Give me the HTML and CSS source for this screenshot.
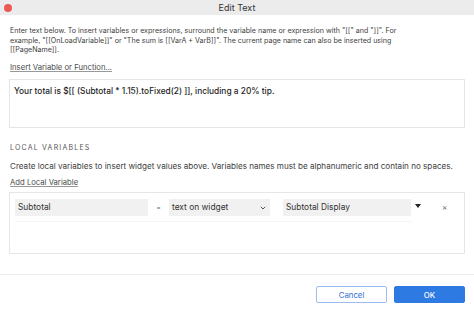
FILE: index.html
```html
<!DOCTYPE html>
<html lang="en">
<head>
  <meta charset="UTF-8" />
  <title>Edit Text</title>
  <link rel="stylesheet" href="styles.css">
</head>
<body>

  <div class="window">

    <div class="titlebar">
      <span class="close"></span>
      <span class="title">Edit Text</span>
      <span></span>
    </div>

    <div class="content">
      <p class="intro">
        Enter text below. To insert variables or expressions, surround the variable name or expression with "[[" and "]]". For<br>
        example, "[[OnLoadVariable]]" or "The sum is [[VarA + VarB]]". The current page name can also be inserted using<br>
        [[PageName]].
      </p>
      <a class="link link-insert" href="#">Insert Variable or Function...</a>

      <div class="editor">Your total is $[[ (Subtotal * 1.15).toFixed(2) ]], including a 20% tip.</div>

      <h4 class="section">LOCAL VARIABLES</h4>
      <p class="hint">Create local variables to insert widget values above. Variables names must be alphanumeric and contain no spaces.</p>
      <a class="link link-add" href="#">Add Local Variable</a>

      <div class="vars">
        <div class="var-row">
          <div class="field field-name">Subtotal</div>
          <span class="equals">=</span>
          <div class="field field-select">
            text on widget
            <svg class="chevron" width="6" height="4" viewBox="0 0 6 4"><path d="M0.8 0.8 L3 3 L5.2 0.8" fill="none" stroke="#555" stroke-width="1"/></svg>
          </div>
          <div class="field field-target">Subtotal Display</div>
          <svg class="caret" width="6" height="4" viewBox="0 0 6 4"><path d="M0 0 L6 0 L3 4 Z" fill="#222"/></svg>
          <span class="remove">&times;</span>
        </div>
      </div>
    </div>

    <div class="footer">
      <button class="btn btn-cancel">Cancel</button>
      <button class="btn btn-ok">OK</button>
    </div>

  </div>

</body>
</html>
```

FILE: styles.css
```css
body {
  font-family: 'Inter', 'Liberation Sans', sans-serif;
  background-color: #ffffff;
  margin: 0;
  padding: 0;
  color: #3a3a3a;
}

.window {
  width: 474px;
  height: 313px;
  display: flex;
  flex-direction: column;
}

.titlebar {
  height: 15px;
  background-color: #ececec;
  display: grid;
  grid-template-columns: 1fr auto 1fr;
  align-items: center;
}

.close {
  width: 8px;
  height: 8px;
  border-radius: 50%;
  background-color: #ec5a56;
  margin-left: 4px;
}

.title {
  font-size: 9px;
  color: #333;
}

.content {
  padding: 0 9px;
  flex: 1;
}

.intro {
  font-size: 7.1px;
  line-height: 9.5px;
  margin: 11px 0 0 1px;
  color: #404040;
  white-space: nowrap;
}

.link {
  display: block;
  width: max-content;
  font-size: 7.7px;
  line-height: 8px;
  color: #4a4a4a;
  text-decoration: underline;
  text-decoration-color: #999;
  margin-left: 1px;
}

.link-insert {
  margin-top: 9.5px;
}

.editor {
  margin-top: 7px;
  border: 1px solid #e5e5e5;
  padding: 7px 4px 0;
  height: 40px;
  font-size: 8.35px;
  line-height: 8px;
  font-weight: 500;
  color: #1e1e1e;
}

.section {
  margin: 15.5px 0 0 1px;
  font-size: 7px;
  line-height: 8px;
  font-weight: normal;
  letter-spacing: 1.2px;
  color: #555;
}

.hint {
  margin: 10.5px 0 0 1px;
  font-size: 8.1px;
  line-height: 8px;
  color: #404040;
  white-space: nowrap;
}

.link-add {
  margin-top: 9px;
}

.vars {
  margin-top: 5px;
  border: 1px solid #e6e6e6;
  padding: 6px 0 0 5px;
  height: 54px;
}

.var-row {
  display: flex;
  align-items: center;
  height: 17px;
  position: relative;
}

.var-row::after {
  content: "";
  position: absolute;
  left: 0;
  width: 396px;
  bottom: -6px;
  border-bottom: 1px solid #f4f4f4;
}

.field {
  height: 17px;
  background-color: #f1f1f1;
  font-size: 8.4px;
  line-height: 17px;
  color: #333;
  padding-left: 3px;
  box-sizing: border-box;
}

.field-name {
  width: 133px;
}

.equals {
  width: 21px;
  text-align: center;
  font-size: 7px;
  color: #666;
}

.field-select {
  width: 101px;
  display: flex;
  justify-content: space-between;
  align-items: center;
  padding-right: 4px;
}

.field-target {
  width: 128px;
  margin-left: 13px;
}

.caret {
  margin-left: 4px;
  margin-top: -4px;
}

.remove {
  margin-left: 21px;
  font-size: 8px;
  color: #666;
  margin-top: -2px;
}

.footer {
  height: 39px;
  border-top: 1px solid #ececec;
  display: flex;
  justify-content: flex-end;
  align-items: flex-start;
  gap: 7px;
  padding: 11px 9px 0 0;
  box-sizing: border-box;
}

.btn {
  width: 71px;
  height: 17px;
  border-radius: 2px;
  font-family: 'Inter', 'Liberation Sans', sans-serif;
  font-size: 7.8px;
  cursor: pointer;
  padding: 0;
}

.btn-cancel {
  background-color: #fff;
  border: 1px solid #9dbdf0;
  color: #2f6ed6;
}

.btn-ok {
  background-color: #2d7be2;
  border: 1px solid #2d7be2;
  color: #fff;
  font-weight: 500;
}
```
